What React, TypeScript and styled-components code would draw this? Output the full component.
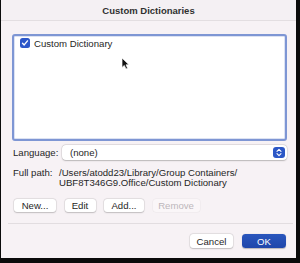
import React from 'react';
import styled, { createGlobalStyle } from 'styled-components';

const Global = createGlobalStyle`
  html, body { margin: 0; padding: 0; background: #0b0b0b; }
  body {
    width: 300px;
    height: 263px;
    overflow: hidden;
    font-family: "Liberation Sans", Arial, Helvetica, sans-serif;
  }
`;

const Window = styled.div`
  margin-left: 1px;
  width: 295px;
  height: 258px;
  background: #f7f2f5;
  display: flex;
  flex-direction: column;
  color: #262626;
  font-size: 9.6px;
`;

const TitleBar = styled.div`
  height: 20px;
  flex: none;
  border-bottom: 1px solid #e3dee1;
  background: #f4f0f3;
  display: flex;
  align-items: center;
  justify-content: center;
  font-weight: bold;
  font-size: 9.5px;
  color: #303030;
`;

const Body = styled.div`
  padding: 13px 9px 0 11px;
  display: flex;
  flex-direction: column;
`;

const ListBox = styled.div`
  position: relative;
  height: 103px;
  border: 2px solid #7e96d4;
  border-radius: 3px;
  background: #ffffff;
  box-shadow: inset 0 0 0 0.5px #b9c5e6;
`;

const ListRow = styled.div`
  height: 14px;
  display: flex;
  align-items: center;
  gap: 4px;
  padding-left: 6px;
`;

const CheckBox = styled.span`
  width: 10px;
  height: 10px;
  border-radius: 2.5px;
  background: #2d57c9;
  display: flex;
  align-items: center;
  justify-content: center;
`;

const Pointer = styled.svg`
  position: absolute;
  left: 107px;
  top: 21px;
`;

const FieldRow = styled.div<{ $top: number }>`
  display: flex;
  align-items: flex-start;
  margin-top: ${(p) => p.$top}px;
`;

const FieldLabel = styled.div<{ $w: number; $lh: number }>`
  width: ${(p) => p.$w}px;
  flex: none;
  padding-left: 1px;
  box-sizing: border-box;
  line-height: ${(p) => p.$lh}px;
`;

const Select = styled.div`
  position: relative;
  flex: 1;
  height: 15px;
  background: #ffffff;
  border-radius: 4px;
  box-shadow: 0 0 0 0.5px rgba(0, 0, 0, 0.12), 0 0.5px 1.5px rgba(0, 0, 0, 0.2);
  display: flex;
  align-items: center;
  padding-left: 8px;
`;

const Stepper = styled.span`
  position: absolute;
  right: 2px;
  top: 2px;
  width: 12px;
  height: 11px;
  border-radius: 3px;
  background: #2c57c6;
  display: flex;
  align-items: center;
  justify-content: center;
`;

const PathText = styled.div`
  line-height: 10.5px;
  padding-top: 0.5px;
`;

const ButtonRow = styled.div`
  display: flex;
  gap: 8.5px;
  margin-top: 10.5px;
  padding-left: 2px;
`;

const Button = styled.div<{ $w: number; $disabled?: boolean; $h?: number }>`
  width: ${(p) => p.$w}px;
  height: ${(p) => p.$h ?? 12.5}px;
  border-radius: 3px;
  background: ${(p) => (p.$disabled ? '#faf6f8' : '#ffffff')};
  color: ${(p) => (p.$disabled ? '#bdb7bb' : '#262626')};
  box-shadow: ${(p) =>
    p.$disabled
      ? '0 0 0 0.5px rgba(0,0,0,0.05)'
      : '0 0 0 0.5px rgba(0,0,0,0.1), 0 0.5px 1.5px rgba(0,0,0,0.18)'};
  display: flex;
  align-items: center;
  justify-content: center;
`;

const Separator = styled.div`
  height: 1px;
  background: #e2dde0;
  margin: 11.5px -6px 0 -4px;
`;

const Footer = styled.div`
  display: flex;
  justify-content: flex-end;
  gap: 9px;
  margin-top: 10px;
  padding-right: 1px;
`;

const PrimaryButton = styled.div`
  width: 44px;
  height: 14px;
  border-radius: 3.5px;
  background: linear-gradient(#2a56bd, #1f47ab);
  color: #ffffff;
  display: flex;
  align-items: center;
  justify-content: center;
  box-shadow: 0 0.5px 1px rgba(0, 0, 0, 0.25);
`;

export default function App() {
  return (
    <>
      <Global />
      <Window>
        <TitleBar>Custom Dictionaries</TitleBar>
        <Body>
          <ListBox>
            <ListRow>
              <CheckBox>
                <svg width="8" height="8" viewBox="0 0 8 8">
                  <path d="M1.5 4.2 L3.2 5.9 L6.5 1.9" fill="none" stroke="#fff" strokeWidth="1.4" strokeLinecap="round" strokeLinejoin="round" />
                </svg>
              </CheckBox>
              <span>Custom Dictionary</span>
            </ListRow>
            <Pointer width="9" height="13" viewBox="0 0 9 13">
              <path d="M1 1 L1 10.5 L3.3 8.4 L5 12 L6.6 11.3 L5 7.8 L8 7.8 Z" fill="#111" stroke="#fff" strokeWidth="0.7" />
            </Pointer>
          </ListBox>
          <FieldRow $top={4}>
            <FieldLabel $w={50} $lh={15}>Language:</FieldLabel>
            <Select>
              (none)
              <Stepper>
                <svg width="6" height="9" viewBox="0 0 6 9">
                  <path d="M1 3.3 L3 1.3 L5 3.3 M1 5.7 L3 7.7 L5 5.7" fill="none" stroke="#fff" strokeWidth="1.1" strokeLinecap="round" strokeLinejoin="round" />
                </svg>
              </Stepper>
            </Select>
          </FieldRow>
          <FieldRow $top={7}>
            <FieldLabel $w={47} $lh={11}>Full path:</FieldLabel>
            <PathText>
              /Users/atodd23/Library/Group Containers/
              <br />
              UBF8T346G9.Office/Custom Dictionary
            </PathText>
          </FieldRow>
          <ButtonRow>
            <Button $w={42}>New...</Button>
            <Button $w={31}>Edit</Button>
            <Button $w={40}>Add...</Button>
            <Button $w={47} $disabled>Remove</Button>
          </ButtonRow>
          <Separator />
          <Footer>
            <Button $w={43} $h={14}>Cancel</Button>
            <PrimaryButton>OK</PrimaryButton>
          </Footer>
        </Body>
      </Window>
    </>
  );
}
